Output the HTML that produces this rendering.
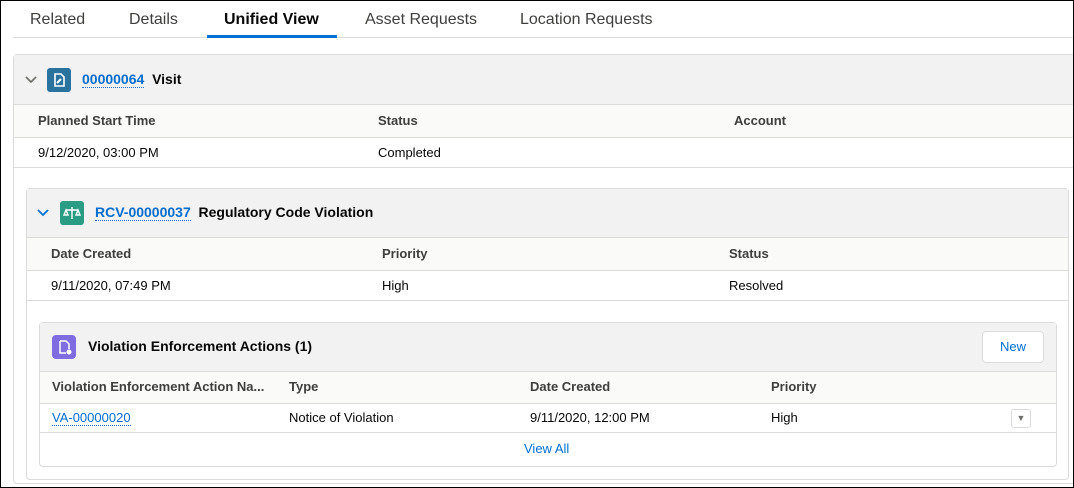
<!DOCTYPE html>
<html><head><style>
*{box-sizing:border-box;margin:0;padding:0}
html,body{width:1074px;height:488px;overflow:hidden}
body{background:#fff;font-family:"Liberation Sans",sans-serif;color:#080707;position:relative;font-size:13px}
.frame{position:absolute;left:0;top:0;width:1074px;height:488px;border:1px solid #000;z-index:10;pointer-events:none}
.abs{position:absolute}
.tab{position:absolute;top:11px;font-size:16px;color:#3e3e3c}
.card{position:absolute;border:1px solid #dddbda;border-radius:4px;background:#fff}
.hdr{position:absolute;left:0;right:0;top:0;background:#f3f2f2;border-bottom:1px solid #dddbda}
.ch{position:absolute;left:0;right:0;background:#fafaf9;border-bottom:1px solid #dddbda;font-weight:bold;color:#3e3e3c}
.row{position:absolute;left:0;right:0;border-bottom:1px solid #dddbda}
.t{position:absolute;white-space:nowrap}
a{color:#006dcc;text-decoration:none;border-bottom:1px dotted #006dcc}
.ttl{font-size:14px;font-weight:bold}
</style></head><body>
<div class="frame"></div>
<div class="tab" style="left:30px">Related</div>
<div class="tab" style="left:129px">Details</div>
<div class="tab" style="left:224px;color:#080707;font-weight:bold">Unified View</div>
<div class="tab" style="left:365px">Asset Requests</div>
<div class="tab" style="left:520px">Location Requests</div>
<div class="abs" style="left:13px;top:37px;width:1061px;height:1px;background:#dddbda"></div>
<div class="abs" style="left:207px;top:35px;width:130px;height:3px;background:#0070d2"></div>

<div class="card" style="left:13px;top:54px;width:1070px;height:430px">
 <div class="hdr" style="height:50px"></div>
 <svg class="abs" style="left:10px;top:20px" width="14" height="10" viewBox="0 0 14 10"><path d="M2 2l5 5 5-5" fill="none" stroke="#706e6b" stroke-width="1.6"/></svg>
 <div class="abs" style="left:33px;top:13px;width:24px;height:24px;background:#2a739e;border-radius:3px">
  <svg width="24" height="24" viewBox="0 0 24 24"><path d="M8 6h6l3 3v9H8z" fill="none" stroke="#fff" stroke-width="1.6"/><path d="M10 15l4-4" stroke="#fff" stroke-width="2"/></svg></div>
 <div class="t ttl" style="left:68px;top:16px"><a>00000064</a> &nbsp;Visit</div>
 <div class="ch" style="top:50px;height:33px"><span class="t" style="left:24px;top:8px">Planned Start Time</span><span class="t" style="left:364px;top:8px">Status</span><span class="t" style="left:720px;top:8px">Account</span></div>
 <div class="row" style="top:83px;height:30px"><span class="t" style="left:24px;top:7px">9/12/2020, 03:00 PM</span><span class="t" style="left:364px;top:7px">Completed</span></div>

 <div class="card" style="left:12px;top:133px;width:1043px;height:292px">
  <div class="hdr" style="height:49px"></div>
  <svg class="abs" style="left:9px;top:19px" width="14" height="10" viewBox="0 0 14 10"><path d="M2 2l5 5 5-5" fill="none" stroke="#0070d2" stroke-width="1.8"/></svg>
  <div class="abs" style="left:33px;top:12px;width:24px;height:24px;background:#2a9c84;border-radius:3px">
   <svg width="24" height="24" viewBox="0 0 24 24"><path d="M12 6v12M6 9h12M6 9l-2 5h4zM18 9l-2 5h4z" fill="none" stroke="#fff" stroke-width="1.4"/></svg></div>
  <div class="t ttl" style="left:68px;top:15px"><a>RCV-00000037</a> &nbsp;Regulatory Code Violation</div>
  <div class="ch" style="top:49px;height:33px"><span class="t" style="left:24px;top:8px">Date Created</span><span class="t" style="left:355px;top:8px">Priority</span><span class="t" style="left:702px;top:8px">Status</span></div>
  <div class="row" style="top:82px;height:30px"><span class="t" style="left:24px;top:7px">9/11/2020, 07:49 PM</span><span class="t" style="left:355px;top:7px">High</span><span class="t" style="left:702px;top:7px">Resolved</span></div>

  <div class="card" style="left:12px;top:133px;width:1018px;height:145px">
   <div class="hdr" style="height:49px"></div>
   <div class="abs" style="left:12px;top:12px;width:24px;height:24px;background:#7f6ce0;border-radius:4px">
    <svg width="24" height="24" viewBox="0 0 24 24"><path d="M8 6h6l3 3v5M8 6v12h6" fill="none" stroke="#fff" stroke-width="1.5"/><circle cx="17" cy="17" r="2.5" fill="#fff"/></svg></div>
   <div class="t ttl" style="left:48px;top:15px">Violation Enforcement Actions (1)</div>
   <div class="abs" style="left:942px;top:8px;width:62px;height:32px;border:1px solid #dddbda;border-radius:4px;background:#fff;color:#0070d2;text-align:center;line-height:30px">New</div>
   <div class="ch" style="top:49px;height:32px"><span class="t" style="left:12px;top:7px">Violation Enforcement Action Na...</span><span class="t" style="left:249px;top:7px">Type</span><span class="t" style="left:490px;top:7px">Date Created</span><span class="t" style="left:731px;top:7px">Priority</span></div>
   <div class="row" style="top:81px;height:29px"><span class="t" style="left:12px;top:6px"><a>VA-00000020</a></span><span class="t" style="left:249px;top:6px">Notice of Violation</span><span class="t" style="left:490px;top:6px">9/11/2020, 12:00 PM</span><span class="t" style="left:731px;top:6px">High</span>
    <div class="abs" style="left:971px;top:5px;width:20px;height:19px;border:1px solid #dddbda;border-radius:3px;font-size:9px;color:#706e6b;text-align:center;line-height:17px">&#9660;</div></div>
   <div class="t" style="left:484px;top:118px;color:#0070d2">View All</div>
  </div>
 </div>
</div>
</body></html>
